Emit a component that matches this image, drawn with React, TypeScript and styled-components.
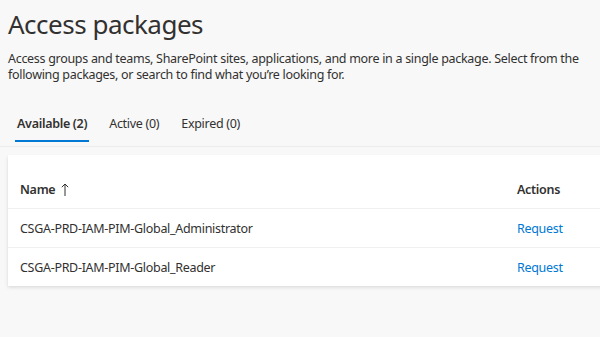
import styled, { createGlobalStyle } from "styled-components";

const GlobalStyle = createGlobalStyle`
  html, body {
    margin: 0;
    padding: 0;
    background: #f8f8f8;
    overflow: hidden;
  }
  body {
    font-family: "Noto Sans", "Open Sans", sans-serif;
    color: #323130;
  }
`;

const packages = ["CSGA-PRD-IAM-PIM-Global_Administrator", "CSGA-PRD-IAM-PIM-Global_Reader"];

const tabs = [
  { label: "Available (2)", active: true },
  { label: "Active (0)", active: false },
  { label: "Expired (0)", active: false },
];

const SortUp = () => (
  <ArrowIcon width="8" height="13" viewBox="0 0 8 13">
    <path d="M4 1v12M0.8 4.2L4 1l3.2 3.2" fill="none" stroke="#323130" strokeWidth="1" />
  </ArrowIcon>
);

const App = () => {
  return (
    <Page>
      <GlobalStyle />
      <Title>Access packages</Title>
      <Intro>
        Access groups and teams, SharePoint sites, applications, and more in a single package. Select from the
        following packages, or search to find what you’re looking for.
      </Intro>
      <Tabs>
        {tabs.map((t) => (
          <Tab key={t.label} $active={t.active}>
            {t.label}
          </Tab>
        ))}
      </Tabs>
      <Card>
        <HeaderRow>
          <NameCell $head>
            Name
            <SortUp />
          </NameCell>
          <ActionCell $head>Actions</ActionCell>
        </HeaderRow>
        {packages.map((p) => (
          <Row key={p}>
            <NameCell>{p}</NameCell>
            <ActionCell>
              <RequestLink>Request</RequestLink>
            </ActionCell>
          </Row>
        ))}
      </Card>
    </Page>
  );
};

export default App;

const Page = styled.div`
  width: 600px;
  height: 337px;
  padding: 0 0 0 8px;
  box-sizing: border-box;
  letter-spacing: -0.3px;
`;

const Title = styled.h1`
  margin: 0;
  padding-top: 5px;
  font-size: 26px;
  font-weight: 400;
  line-height: 38px;
  letter-spacing: -0.5px;
  color: #323130;
`;

const Intro = styled.p`
  margin: 8px 0 0;
  width: 580px;
  font-size: 12.5px;
  line-height: 16px;
`;

const Tabs = styled.div`
  display: flex;
  margin-top: 28px;
  margin-left: -8px;
  padding-left: 8px;
  border-bottom: 1px solid #ececec;
  height: 35px;
`;

const Tab = styled.div<{ $active: boolean }>`
  position: relative;
  padding: 0 9px;
  margin-right: 4px;
  font-size: 12.5px;
  line-height: 26px;
  font-weight: ${(p) => (p.$active ? 600 : 400)};
  color: #323130;

  &::after {
    content: "";
    display: ${(p) => (p.$active ? "block" : "none")};
    position: absolute;
    left: 7px;
    right: 7px;
    top: 29px;
    height: 2px;
    background: #0078d4;
  }
`;

const Card = styled.div`
  margin-top: 8px;
  width: 620px;
  background: #fff;
  box-shadow: 0 1.6px 3.6px rgba(0, 0, 0, 0.13), 0 0.3px 0.9px rgba(0, 0, 0, 0.11);
`;

const HeaderRow = styled.div`
  display: flex;
  align-items: flex-end;
  height: 53px;
  border-bottom: 1px solid #f0f0f0;
`;

const Row = styled.div`
  display: flex;
  align-items: center;
  height: 36px;
  padding-top: 2px;
  border-bottom: 1px solid #f0f0f0;

  &:last-child {
    border-bottom: none;
  }
`;

const NameCell = styled.div<{ $head?: boolean }>`
  flex: 0 0 497px;
  display: flex;
  align-items: center;
  gap: 6px;
  padding-left: 12px;
  font-size: 12.5px;
  font-weight: ${(p) => (p.$head ? 600 : 400)};
  line-height: ${(p) => (p.$head ? "36px" : "20px")};
`;

const ActionCell = styled.div<{ $head?: boolean }>`
  flex: 1;
  font-size: 12.5px;
  font-weight: ${(p) => (p.$head ? 600 : 400)};
  line-height: ${(p) => (p.$head ? "36px" : "20px")};
`;

const ArrowIcon = styled.svg`
  display: block;
  margin-top: -1px;
`;

const RequestLink = styled.span`
  color: #0078d4;
  cursor: pointer;
`;
